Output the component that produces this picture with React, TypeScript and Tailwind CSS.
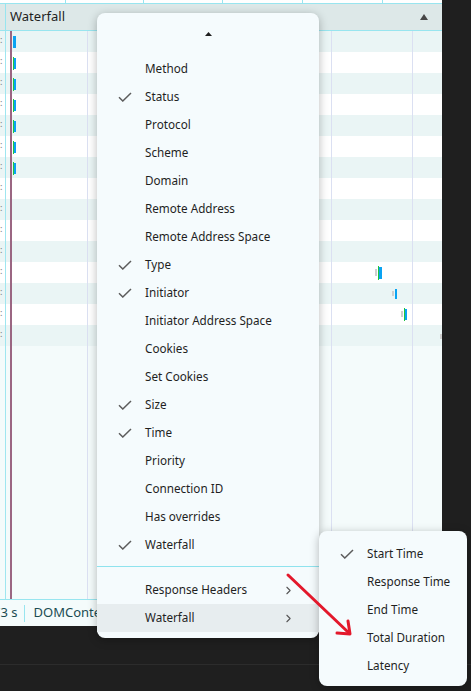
import { ChevronRight } from 'lucide-react';

const columns = [
  { name: 'Method', checked: false },
  { name: 'Status', checked: true },
  { name: 'Protocol', checked: false },
  { name: 'Scheme', checked: false },
  { name: 'Domain', checked: false },
  { name: 'Remote Address', checked: false },
  { name: 'Remote Address Space', checked: false },
  { name: 'Type', checked: true },
  { name: 'Initiator', checked: true },
  { name: 'Initiator Address Space', checked: false },
  { name: 'Cookies', checked: false },
  { name: 'Set Cookies', checked: false },
  { name: 'Size', checked: true },
  { name: 'Time', checked: true },
  { name: 'Priority', checked: false },
  { name: 'Connection ID', checked: false },
  { name: 'Has overrides', checked: false },
  { name: 'Waterfall', checked: true },
];

const waterfallOptions = [
  { name: 'Start Time', checked: true },
  { name: 'Response Time', checked: false },
  { name: 'End Time', checked: false },
  { name: 'Total Duration', checked: false },
  { name: 'Latency', checked: false },
];

// bar positions inside the rows (left offset in px, from x=0 of page)
const bars: ({ gray?: number; green?: number; blue: number; blueW: number; top: number; h: number } | null)[] = [
  { blue: 13, blueW: 3, top: 4, h: 13 },
  { green: 13, blue: 14, blueW: 2, top: 5, h: 12 },
  { green: 13, blue: 14, blueW: 2, top: 5, h: 12 },
  { green: 13, blue: 14, blueW: 2, top: 5, h: 12 },
  { green: 13, blue: 14, blueW: 2, top: 5, h: 12 },
  { green: 13, blue: 14, blueW: 2, top: 5, h: 12 },
  { green: 13, blue: 14, blueW: 2, top: 5, h: 12 },
  null,
  null,
  null,
  null,
  { gray: 375, green: 378, blue: 379, blueW: 3, top: 4, h: 13 },
  { gray: 392, blue: 395, blueW: 2, top: 5, h: 11 },
  { gray: 401, green: 404, blue: 405, blueW: 2, top: 4, h: 12 },
  { gray: 440, blue: 0, blueW: 0, top: 6, h: 5 },
];

const Check = () => (
  <svg width="14" height="10" viewBox="0 0 14 10" className="shrink-0">
    <path d="M1 5.2 L4.8 9 L13 1" fill="none" stroke="#5c5c5c" strokeWidth="1.5" />
  </svg>
);

const MenuItem = ({ name, checked, sub, active }: { name: string; checked?: boolean; sub?: boolean; active?: boolean }) => (
  <div className={`flex items-center h-[28px] pl-[21px] pr-[24px] whitespace-nowrap ${active ? 'bg-[#e7edef]' : ''}`}>
    <div className="w-[27px] shrink-0 flex items-center">{checked && <Check />}</div>
    <span className="flex-1 text-[11.7px] text-[#1f1f1f]">{name}</span>
    {sub && <ChevronRight className="w-[13px] h-[13px] text-[#555]" strokeWidth={2} />}
  </div>
);

const App = () => {
  return (
    <div
      className="relative w-[471px] h-[691px] overflow-hidden bg-[#1f1f1f]"
      style={{ fontFamily: '"Segoe UI", "Noto Sans", sans-serif' }}
    >
      {/* network panel */}
      <div className="flex flex-col w-[442px] h-[626px] bg-[#f4fbfb]">
        {/* previous header row, cut off */}
        <div className="flex h-[4px] bg-white border-b border-[#98e5ef]">
          <div className="w-[66px] border-r border-[#98e5ef]" />
          <div className="w-[78px] border-r border-[#98e5ef]" />
          <div className="w-[79px] border-r border-[#98e5ef]" />
          <div className="w-[80px] border-r border-[#98e5ef]" />
          <div className="w-[80px] border-r border-[#98e5ef]" />
          <div className="flex-1" />
        </div>
        {/* waterfall header */}
        <div className="flex h-[27px] bg-[#dde8e8] border-b border-[#98e5ef]">
          <div className="w-[6px] border-r border-[#98e5ef]" />
          <div className="flex-1 flex items-center pl-[4px] text-[13px] text-[#1f1f1f]">Waterfall</div>
          <div className="w-[22px] flex items-center">
            <svg width="8" height="6" viewBox="0 0 8 6">
              <path d="M4 0 L8 6 L0 6 Z" fill="#474747" />
            </svg>
          </div>
        </div>
        {/* rows */}
        <div className="relative flex-1">
          {bars.map((bar, i) => (
            <div key={i} className={`relative h-[21px] ${i % 2 === 0 ? 'bg-[#eaf5f5]' : 'bg-white'}`}>
              <span className="absolute left-0 top-[4px] text-[9px] leading-none text-[#777]">:</span>
              {bar && (
                <>
                  {bar.gray !== undefined && (
                    <div
                      className="absolute w-[2px] bg-[#cfcfcf]"
                      style={{ left: bar.gray, top: bar.top + 3, height: Math.max(bar.h - 6, 5) }}
                    />
                  )}
                  {bar.green !== undefined && (
                    <div className="absolute w-[1px] bg-[#1fc43f]" style={{ left: bar.green, top: bar.top, height: bar.h + 1 }} />
                  )}
                  {bar.blueW > 0 && (
                    <div
                      className="absolute bg-[#0aa3f2]"
                      style={{ left: bar.blue, width: bar.blueW, top: bar.top + 1, height: bar.h - 1 }}
                    />
                  )}
                </>
              )}
            </div>
          ))}
          {/* vertical grid lines */}
          <div className="absolute top-0 bottom-0 left-[5px] w-[1px] bg-[#9fe6f0]" />
          <div className="absolute top-0 bottom-0 left-[10px] w-[2px] bg-[#9a6682]" />
          <div className="absolute top-0 bottom-0 left-[87px] w-[1px] bg-[#dbe0f2]" />
          <div className="absolute top-0 bottom-0 left-[331px] w-[1px] bg-[#dbe0f2]" />
          <div className="absolute top-0 bottom-0 left-[412px] w-[1px] bg-[#dbe0f2]" />
        </div>
        {/* summary bar */}
        <div className="flex items-center h-[27px] border-t border-[#98e5ef] bg-[#f4fbfb] text-[13px] text-[#1b4c52] whitespace-nowrap">
          <span className="ml-[-7px] pr-[7px]">73 s</span>
          <div className="w-[1px] h-[17px] bg-[#98e5ef]" />
          <span className="pl-[8px]">DOMContentLoaded: 1.20 s</span>
        </div>
      </div>
      <div className="h-[39px] border-b border-[#2c2c2c]" />

      {/* column context menu */}
      <div className="absolute left-[97px] top-[13px] w-[222px] h-[625px] rounded-[8px] bg-[#f5fbfd] shadow-[0_2px_10px_rgba(0,0,0,0.28)] flex flex-col">
        <div className="h-[42px] flex items-center justify-center">
          <svg width="7" height="4" viewBox="0 0 7 4" className="ml-[1px]">
            <path d="M3.5 0 L7 4 L0 4 Z" fill="#1f1f1f" />
          </svg>
        </div>
        {columns.map((c) => (
          <MenuItem key={c.name} name={c.name} checked={c.checked} />
        ))}
        <div className="mt-[7px] mb-[9px] h-[1px] bg-[#8fe3ee]" />
        <MenuItem name="Response Headers" sub />
        <MenuItem name="Waterfall" sub active />
      </div>

      {/* waterfall submenu */}
      <div className="absolute left-[319px] top-[531px] w-[148px] h-[155px] rounded-[8px] bg-[#f5fbfd] shadow-[0_2px_10px_rgba(0,0,0,0.28)] pt-[9px]">
        {waterfallOptions.map((o) => (
          <MenuItem key={o.name} name={o.name} checked={o.checked} />
        ))}
      </div>

      {/* red annotation arrow */}
      <svg className="absolute left-0 top-0 pointer-events-none" width="471" height="691">
        <path d="M288 575 L349 633" stroke="#e3182b" strokeWidth="3" strokeLinecap="round" fill="none" />
        <path d="M337 633 L350 634 L348 621" stroke="#e3182b" strokeWidth="3" strokeLinecap="round" strokeLinejoin="round" fill="none" />
      </svg>
    </div>
  );
};

export default App;
